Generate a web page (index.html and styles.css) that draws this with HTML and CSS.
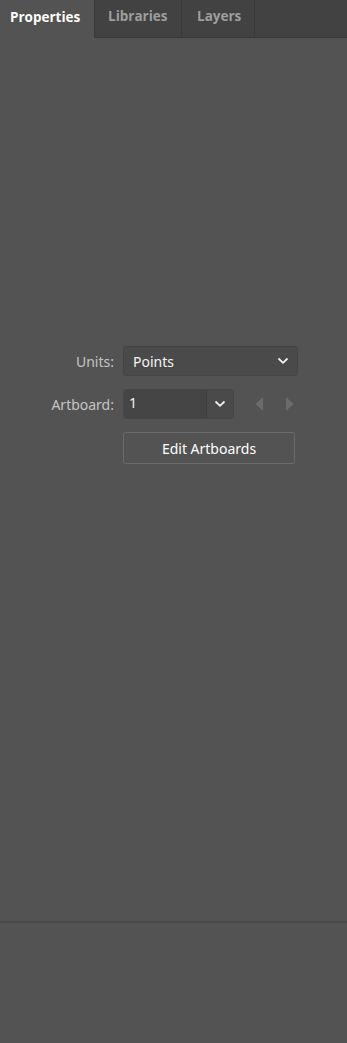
FILE: index.html
```html
<!DOCTYPE html>
<html>
<head>
<meta charset="utf-8">
<link rel="stylesheet" href="styles.css">
</head>
<body>
<div class="panel">
  <div class="tabs">
    <div class="tab active">Properties</div>
    <div class="tab tab-lib">Libraries</div>
    <div class="tab tab-lay">Layers</div>
    <div class="tab-fill"></div>
  </div>
  <div class="content">
    <div class="form">
      <div class="row">
        <span class="label">Units:</span>
        <div class="select">
          <span class="select-text">Points</span>
          <svg class="chev" width="12" height="8" viewBox="0 0 12 8"><path d="M1.5 1.5 L6 5.8 L10.5 1.5" fill="none" stroke="#f2f2f2" stroke-width="1.8"/></svg>
        </div>
      </div>
      <div class="row row2">
        <span class="label">Artboard:</span>
        <div class="combo">
          <span class="combo-input">1</span>
          <span class="combo-btn"><svg width="12" height="8" viewBox="0 0 12 8"><path d="M1.5 1.5 L6 5.8 L10.5 1.5" fill="none" stroke="#f2f2f2" stroke-width="1.8"/></svg></span>
        </div>
        <div class="arrows">
          <svg width="10" height="16" viewBox="0 0 10 16"><path d="M9 1 L1.5 8 L9 15 Z" fill="#6b6b6b"/></svg>
          <svg width="10" height="16" viewBox="0 0 10 16"><path d="M1 1 L8.5 8 L1 15 Z" fill="#6b6b6b"/></svg>
        </div>
      </div>
      <div class="row row3">
        <span class="label"></span>
        <div class="button">Edit Artboards</div>
      </div>
    </div>
  </div>
  <div class="footer"></div>
</div>
</body>
</html>
```
FILE: styles.css
```css
html, body {
  margin: 0;
  padding: 0;
  background: #535353;
}
body {
  width: 347px;
  height: 1043px;
  overflow: hidden;
  font-family: "Open Sans", "Noto Sans", "Liberation Sans", sans-serif;
}
.panel {
  display: flex;
  flex-direction: column;
  height: 1043px;
}
.tabs {
  display: flex;
  height: 38px;
  background: #424242;
}
.tab {
  display: flex;
  align-items: center;
  box-sizing: border-box;
  padding: 0 0 5px 13px;
  font-size: 13.5px;
  font-weight: 700;
  color: #9e9e9e;
  border-right: 1px solid #3a3a3a;
  border-bottom: 1px solid #393939;
  letter-spacing: 0;
}
.tab.active {
  width: 95px;
  background: #535353;
  color: #ffffff;
  padding: 0 0 5px 10px;
  border-bottom: none;
}
.tab-lib { width: 87px; }
.tab-lay { width: 73px; padding-left: 15px; }
.tab-fill {
  flex: 1;
  border-bottom: 1px solid #393939;
}
.content {
  flex: 1;
  display: flex;
  flex-direction: column;
  padding-top: 308px;
  border-bottom: 1px solid #494949;
}
.form {
  display: flex;
  flex-direction: column;
}
.row {
  display: flex;
  align-items: center;
  gap: 9px;
}
.row2 { margin-top: 13px; }
.row3 { margin-top: 13px; }
.label {
  width: 114px;
  text-align: right;
  font-size: 14px;
  color: #c4c4c4;
  font-family: "Noto Sans", "Open Sans", sans-serif;
}
.select {
  width: 175px;
  height: 30px;
  box-sizing: border-box;
  border: 1px solid #454545;
  border-radius: 3px;
  background: #4a4a4a;
  display: flex;
  align-items: center;
  justify-content: space-between;
  padding: 0 8px 0 9px;
}
.select-text {
  font-size: 14px;
  color: #f4f4f4;
  font-family: "Noto Sans", "Open Sans", sans-serif;
}
.combo {
  display: flex;
  width: 111px;
  height: 30px;
  box-sizing: border-box;
  border: 1px solid #464646;
  border-radius: 3px;
  overflow: hidden;
}
.combo-input {
  flex: 1;
  background: #454545;
  font-size: 14px;
  color: #f4f4f4;
  padding: 2px 0 0 5px;
  font-family: "Noto Sans", "Open Sans", sans-serif;
  line-height: 22px;
}
.combo-btn {
  width: 26px;
  background: #4a4a4a;
  border-left: 1px solid #3e3e3e;
  display: flex;
  align-items: center;
  justify-content: center;
}
.arrows {
  display: flex;
  gap: 21px;
  margin-left: 11px;
}
.button {
  width: 172px;
  height: 32px;
  box-sizing: border-box;
  border: 1px solid #6b6b6b;
  border-radius: 3px;
  display: flex;
  align-items: center;
  justify-content: center;
  font-size: 14px;
  color: #ffffff;
  font-family: "Noto Sans", "Open Sans", sans-serif;
}
.footer {
  height: 120px;
  border-top: 1px solid #4a4a4a;
}
```
